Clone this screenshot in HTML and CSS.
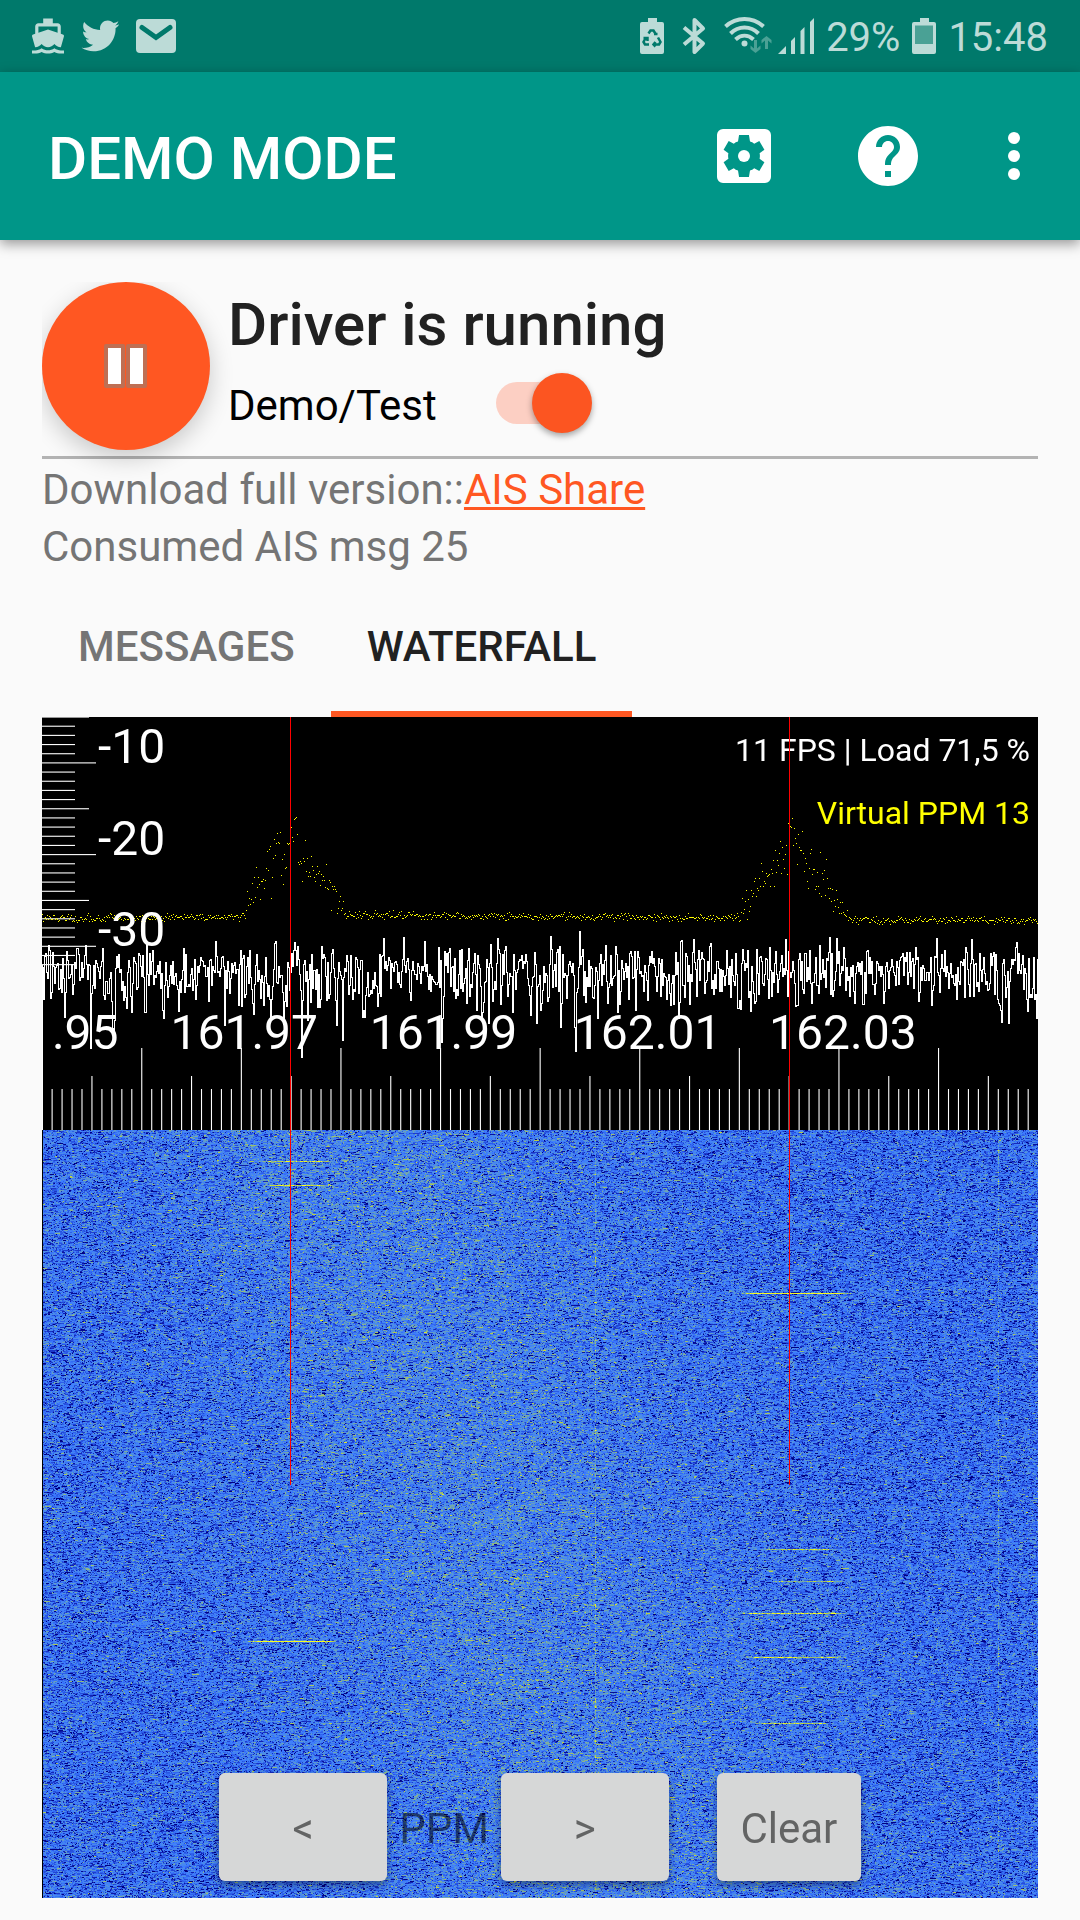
FILE: index.html
```html
<!DOCTYPE html>
<html lang="en">
<head>
<meta charset="utf-8">
<meta name="viewport" content="width=device-width, initial-scale=1">
<title>AIS Share</title>
<link rel="stylesheet" href="styles.css">
</head>
<body>
<div class="status-bar">
  <div class="status-group status-left">
    <svg class="ic-boat" viewBox="2 1 20 22"><path d="M20 21c-1.39 0-2.78-.47-4-1.32-2.44 1.71-5.56 1.71-8 0C6.78 20.53 5.39 21 4 21H2v2h2c1.38 0 2.74-.35 4-.99 2.52 1.29 5.48 1.29 8 0 1.26.65 2.62.99 4 .99h2v-2h-2zM3.95 19H4c1.6 0 3.02-.88 4-2 .98 1.12 2.4 2 4 2s3.02-.88 4-2c.98 1.12 2.4 2 4 2h.05l1.89-6.68c.08-.26.06-.54-.06-.78s-.34-.42-.6-.5L20 10.62V6c0-1.1-.9-2-2-2h-3V1H9v3H6c-1.1 0-2 .9-2 2v4.62l-1.29.42c-.26.08-.48.26-.6.5s-.15.52-.06.78L3.95 19zM6 6h12v3.97L12 8 6 9.97V6z"/></svg>
    <svg class="ic-bird" viewBox="0 2 24 20"><path d="M23.643 4.937c-.835.37-1.732.62-2.675.733.962-.576 1.7-1.49 2.048-2.578-.9.534-1.897.922-2.958 1.13-.85-.904-2.06-1.47-3.4-1.47-2.572 0-4.658 2.086-4.658 4.66 0 .364.042.718.12 1.06-3.873-.195-7.304-2.05-9.602-4.868-.4.69-.63 1.49-.63 2.342 0 1.616.823 3.043 2.072 3.878-.764-.025-1.482-.234-2.11-.583v.06c0 2.257 1.605 4.14 3.737 4.568-.392.106-.803.162-1.227.162-.3 0-.593-.028-.877-.082.593 1.85 2.313 3.198 4.352 3.234-1.595 1.25-3.604 1.995-5.786 1.995-.376 0-.747-.022-1.112-.065 2.062 1.323 4.51 2.093 7.14 2.093 8.57 0 13.255-7.098 13.255-13.254 0-.2-.005-.402-.014-.602.91-.658 1.7-1.477 2.323-2.41z"/></svg>
    <svg class="ic-mail" viewBox="0 0 40 34"><rect width="40" height="34" rx="4"/><path class="cut" d="M6 8.500L20 18.500L34 8.500"/></svg>
  </div>
  <div class="status-group status-right">
    <svg class="ic-battery" viewBox="0 0 24 36"><path d="M8 0h9v4h5a2 2 0 0 1 2 2v28a2 2 0 0 1-2 2H2a2 2 0 0 1-2-2V6a2 2 0 0 1 2-2h6z"/><path class="recycle" d="M8.500 15.500L10.500 12.500h3L16 16.500M18 19.500L20.500 24L19 26.500H14M9 26.500H5L3.500 24L6 19.500M14 16h3.500M15.500 24l-2 2.500 2 2M3.500 20h4v3"/></svg>
    <svg class="ic-bt" viewBox="0 0 24 38"><path d="M2 10.500L21 26.500L12.500 35V3L21 11.500L2 27.500"/></svg>
    <svg class="ic-wifi" viewBox="0 0 48 38"><g class="arcs"><path d="M1.500 9.500C12.500-.5 28.500-.5 39.500 9.500"/><path d="M6.500 16.500C14.500 8.500 26.500 8.500 34.500 16.500"/><path d="M11.500 22.500C17 17.500 24 17.500 29.500 22.500"/></g><circle cx="20.500" cy="26.500" r="3"/><path class="dim" d="M30 23h3v8.500l3.500-3v3.500L31.500 36l-5-4v-3.500l3.500 3zM41 32h3v-8.500l3.500 3V23L42.500 19l-5 4v3.500l3.500-3z"/></svg>
    <svg class="ic-signal" viewBox="0 0 36 36"><path d="M0 36l8-8v8zM13 36V23l4-4v17zM22.500 36V13l4-4v27zM32 36V4l4-4v36z"/></svg>
    <span class="pct">29%</span>
    <svg class="ic-battery" viewBox="0 0 24 36"><path d="M8 0h9v4h5a2 2 0 0 1 2 2v28a2 2 0 0 1-2 2H2a2 2 0 0 1-2-2V6a2 2 0 0 1 2-2h6z"/><path class="level" d="M3 7.500h18V26H3z"/></svg>
    <span class="clock">15:48</span>
  </div>
</div>

<header class="toolbar">
  <h1>DEMO MODE</h1>
  <button class="action" type="button" aria-label="Settings"><svg viewBox="0 0 24 24"><path fill-rule="evenodd" d="M5 3h14a2 2 0 0 1 2 2v14a2 2 0 0 1-2 2H5a2 2 0 0 1-2-2V5a2 2 0 0 1 2-2zM10.350 5L10 7.200Q9.200 7.300 8.600 7.900L6.900 7L5.200 9.900L6.800 11.100Q6.600 12 6.800 12.900L5.200 14.100L6.900 17L8.600 16.100Q9.200 16.700 10 16.800L10.350 19H13.650L14 16.800Q14.800 16.700 15.400 16.100L17.100 17L18.800 14.100L17.200 12.900Q17.400 12 17.200 11.100L18.800 9.900L17.100 7L15.400 7.900Q14.800 7.300 14 7.200L13.650 5z"/><circle cx="12" cy="12" r="2"/></svg></button>
  <button class="action" type="button" aria-label="Help"><svg viewBox="0 0 24 24"><path d="M12 2C6.480 2 2 6.480 2 12s4.480 10 10 10 10-4.480 10-10S17.520 2 12 2zm1 17h-2v-2h2v2zm2.070-7.750l-.9.920C13.450 12.900 13 13.500 13 15h-2v-.5c0-1.100.450-2.100 1.170-2.830l1.240-1.260c.370-.360.590-.860.590-1.410 0-1.100-.9-2-2-2s-2 .9-2 2H8c0-2.210 1.790-4 4-4s4 1.790 4 4c0 .880-.360 1.680-.930 2.250z"/></svg></button>
  <button class="action overflow" type="button" aria-label="More options"><svg viewBox="0 0 24 24"><circle cx="12" cy="6" r="2"/><circle cx="12" cy="12" r="2"/><circle cx="12" cy="18" r="2"/></svg></button>
</header>

<main>
  <section class="driver">
    <div class="fab-clip">
      <button class="fab" type="button" aria-label="Pause"><svg viewBox="0 0 44 44"><rect x="2" y="2" width="17" height="40"/><rect x="24" y="2" width="17" height="40"/></svg></button>
    </div>
    <div class="driver-info">
      <h2>Driver is running</h2>
      <div class="mode">
        <label for="demo">Demo/Test</label>
        <input id="demo" class="switch" type="checkbox" role="switch" checked>
      </div>
    </div>
  </section>

  <div class="notes">
    <p>Download full version::<a href="#full">AIS Share</a></p>
    <p>Consumed AIS msg 25</p>
  </div>

  <div class="tabs" role="tablist">
    <button class="tab" type="button" role="tab" aria-selected="false">MESSAGES</button>
    <button class="tab" type="button" role="tab" aria-selected="true">WATERFALL</button>
  </div>

  <section class="analyzer">
    <div class="spectrum">
      <canvas id="spectrum"></canvas>
      <svg class="labels">
        <g class="scale">
          <text x="56" y="46">-10</text>
          <text x="56" y="138">-20</text>
          <text x="56" y="229">-30</text>
          <text x="1%" y="332">.95</text>
          <text x="12.900%" y="332">161.97</text>
          <text x="32.900%" y="332">161.99</text>
          <text x="53.400%" y="332">162.01</text>
          <text x="73%" y="332">162.03</text>
        </g>
        <svg x="100%" class="stats">
          <text x="-8" y="44">11 FPS | Load 71,5 %</text>
          <text x="-8" y="107" class="ppm">Virtual PPM 13</text>
        </svg>
      </svg>
    </div>
    <div class="waterfall">
      <canvas id="waterfall"></canvas>
      <div class="controls">
        <button class="btn wide" type="button">&lt;</button>
        <span class="ppm-label">PPM</span>
        <button class="btn wide" type="button">&gt;</button>
        <button class="btn clear" type="button">Clear</button>
      </div>
    </div>
    <span class="marker marker-a"></span>
    <span class="marker marker-b"></span>
  </section>
</main>
<script src="app.js"></script>
</body>
</html>
```
FILE: styles.css
```css
* { box-sizing: border-box; }

body {
  margin: 0;
  min-height: 100vh;
  display: flex;
  flex-direction: column;
  background: #fafafa;
  color: #212121;
  font-family: Roboto, sans-serif;
  font-size: 42px;
  line-height: 57px;
}

h1, h2, p { margin: 0; }
button { font: inherit; border: 0; padding: 0; cursor: pointer; }
svg { display: block; }

/* status bar */
.status-bar {
  display: flex;
  justify-content: space-between;
  height: 72px;
  padding: 0 32px;
  background: #00796b;
  color: #bcdbd7;
  font-size: 40px;
}
.status-group { display: flex; align-items: center; }
.status-group svg { fill: #bcdbd7; flex: none; }
.status-group span { padding-top: 2px; }
.status-left { gap: 16px; }
.status-right { gap: 12px; }
.ic-boat { width: 32px; height: 36px; }
.ic-bird { width: 40px; height: 36px; }
.ic-mail { width: 40px; height: 34px; }
.ic-mail .cut { fill: none; stroke: #00796b; stroke-width: 5; stroke-linecap: round; }
.ic-battery { width: 24px; height: 36px; }
.ic-battery .recycle { fill: none; stroke: #00796b; stroke-width: 2.5; }
.ic-battery .level { fill: #4aa195; }
.ic-bt { width: 24px; height: 38px; margin: 0 6px; }
.status-group .ic-bt { fill: none; stroke: #bcdbd7; stroke-width: 4; stroke-linejoin: round; }
.ic-wifi { width: 48px; height: 38px; }
.ic-wifi .arcs { fill: none; stroke: #bcdbd7; stroke-width: 4; }
.ic-wifi .dim { fill: #4aa195; }
.ic-signal { width: 36px; height: 36px; margin-left: -6px; }

/* toolbar */
.toolbar {
  display: flex;
  align-items: center;
  height: 168px;
  padding: 0 12px 0 48px;
  background: #009688;
  color: #fff;
  box-shadow: 0 4px 12px rgba(0, 0, 0, .4);
}
h1 { flex: 1; padding-top: 4px; font-size: 60px; font-weight: 500; }
.action {
  display: flex;
  align-items: center;
  justify-content: center;
  width: 144px;
  height: 144px;
  background: none;
}
.action svg { width: 72px; height: 72px; fill: #fff; }
.overflow { width: 108px; }

/* content */
main {
  flex: 1;
  display: flex;
  flex-direction: column;
  padding: 42px 42px 22px;
}
.driver {
  display: flex;
  gap: 18px;
  height: 177px;
  border-bottom: 3px solid #b3b3b3;
}
.fab-clip { clip-path: inset(0 -42px -42px 0); }
.fab {
  display: flex;
  align-items: center;
  justify-content: center;
  width: 168px;
  height: 168px;
  border-radius: 50%;
  background: #ff5722;
  box-shadow: 0 8px 24px rgba(0, 0, 0, .2);
}
.fab svg { width: 44px; height: 44px; fill: #fff; stroke: #bf6f53; stroke-width: 4; stroke-linejoin: round; }
.driver-info { padding-top: 8px; }
h2 { font-size: 60px; line-height: 70px; font-weight: 500; }
.mode { display: flex; align-items: center; height: 86px; color: #000; }
.mode label { padding-top: 4px; }
.switch {
  appearance: none;
  position: relative;
  width: 88px;
  height: 42px;
  margin: 0 0 0 59px;
  border-radius: 21px;
  background: #fccfc3;
}
.switch::before {
  content: "";
  position: absolute;
  top: -9px;
  right: -8px;
  width: 60px;
  height: 60px;
  border-radius: 50%;
  background: #fc5521;
  box-shadow: 0 3px 6px rgba(0, 0, 0, .35);
}

.notes { height: 114px; padding-top: 2px; color: #757575; }
.notes a {
  color: #ff5722;
  text-decoration-thickness: 3px;
  text-underline-offset: 3px;
  text-decoration-skip-ink: none;
}

.tabs { display: flex; height: 144px; }
.tab {
  padding: 8px 36px 0;
  border-bottom: 6px solid transparent;
  background: none;
  color: #757575;
  font-weight: 500;
}
.tab[aria-selected="true"] { color: #212121; border-color: #ff5722; }

/* analyzer */
.analyzer { flex: 1; position: relative; display: flex; flex-direction: column; }
.analyzer canvas { position: absolute; inset: 0; width: 100%; height: 100%; }
.spectrum { position: relative; height: 413px; background: #000; }
.labels { position: relative; width: 100%; height: 100%; fill: #fff; }
.scale { font-size: 48px; }
.stats { font-size: 32px; text-anchor: end; overflow: visible; }
.ppm { fill: #ff0; }
.marker {
  position: absolute;
  top: 0;
  width: 1px;
  height: 768px;
  background: #f00;
}
.marker-a { left: 24.9%; }
.marker-b { left: 75%; }

.waterfall {
  flex: 1;
  position: relative;
  display: flex;
  align-items: flex-end;
  justify-content: center;
  min-height: 400px;
  background: #3f78ee;
}
.controls {
  position: relative;
  display: flex;
  align-items: center;
  gap: 12px;
  padding-bottom: 17px;
}
.btn {
  height: 108px;
  padding-top: 2px;
  border-radius: 6px;
  background: #d6d7d7;
  color: #636464;
  box-shadow: 0 4px 8px rgba(0, 0, 0, .4);
}
.wide { width: 168px; }
.clear { width: 144px; margin-left: 36px; }
.ppm-label { padding-top: 2px; color: rgba(0, 0, 0, .54); }
```
FILE: app.js
```js
// Small seeded generator so the demo signal is the same on every load.
function generator(seed) {
  return function () {
    seed = (seed + 0x6D2B79F5) | 0;
    let t = Math.imul(seed ^ (seed >>> 15), 1 | seed);
    t = (t + Math.imul(t ^ (t >>> 7), 61 | t)) ^ t;
    return ((t ^ (t >>> 14)) >>> 0) / 4294967296;
  };
}

function prepare(id) {
  const canvas = document.getElementById(id);
  canvas.width = canvas.clientWidth;
  canvas.height = canvas.clientHeight;
  return canvas.getContext('2d');
}

function drawSpectrum() {
  const ctx = prepare('spectrum');
  const w = ctx.canvas.width;
  const h = ctx.canvas.height;
  const rnd = generator(7);
  ctx.fillStyle = '#000';
  ctx.fillRect(0, 0, w, h);

  // level scale
  ctx.fillStyle = '#fff';
  for (let k = 0; k < 28; k++) {
    const len = k % 10 === 5 ? 54 : k % 10 === 0 ? 47 : 33;
    ctx.fillRect(0, k * 9.17 - 0.5, len, 1.1);
  }
  // frequency scale
  for (let k = 1; k < 100; k++) {
    const top = k % 10 === 0 ? 331 : k % 5 === 0 ? 359 : 372;
    ctx.fillRect(k * w / 100 - 0.4, top, 1.1, h - top);
  }

  // averaged peaks
  ctx.fillStyle = '#ff0';
  for (let x = 0; x < w; x++) {
    const f = x / w * 996;
    let y = f < 248 ? 201 - f / 124 : f < 700 ? 197 + (f - 248) / 113 : 203;
    let spread = 6;
    for (const [c, half] of [[250, 54], [750, 56]]) {
      const d = Math.abs(f - c) / half;
      if (d < 1) {
        y -= 82 * (1 - d);
        spread = 12 + 36 * Math.min(1, (1 - d) * 2);
      }
    }
    y += (rnd() + rnd() - 1) * spread * 0.8;
    ctx.fillRect(x, Math.round(y), 1, 1);
  }

  // live signal
  const e = () => -Math.log(1 - rnd());
  ctx.fillStyle = '#fff';
  ctx.fillRect(0, 248, 1, h - 248);
  let shared = e() + e();
  let last = 250;
  for (let x = 1; x < w; x++) {
    const fresh = e() + e();
    const level = Math.log10((shared + fresh) / 4);
    const y = Math.round(251 - (level > 0 ? 76 : 84) * level);
    shared = rnd() < 0.5 ? e() + e() : fresh;
    ctx.fillRect(x, Math.min(y, last), 1, Math.abs(y - last) + 1);
    last = y;
  }
}

const palette = [
  [0, 0, 0, 130], [0.2, 20, 40, 185], [0.4, 44, 92, 232], [0.55, 60, 124, 255],
  [0.75, 80, 144, 226], [0.9, 116, 168, 170], [1.1, 190, 210, 60], [1.3, 255, 255, 30]
];

function colour(t) {
  if (t <= 0) return palette[0].slice(1);
  for (let i = 1; i < palette.length; i++) {
    const a = palette[i - 1];
    const b = palette[i];
    if (t < b[0]) {
      const m = (t - a[0]) / (b[0] - a[0]);
      return [1, 2, 3].map(c => a[c] + (b[c] - a[c]) * m);
    }
  }
  return palette[palette.length - 1].slice(1);
}

// received bursts: [row, start, end, strength]
const bursts = [
  [31, 216, 292, 0.5], [55, 223, 288, 0.6], [163, 699, 808, 0.8], [511, 206, 292, 0.8],
  [419, 718, 793, 0.5], [451, 729, 803, 0.45], [483, 700, 806, 0.55],
  [527, 703, 803, 0.55], [593, 713, 786, 0.55]
];

function drawWaterfall() {
  const ctx = prepare('waterfall');
  const w = ctx.canvas.width;
  const h = ctx.canvas.height;
  const img = ctx.createImageData(w, h);
  const rnd = generator(42);
  for (let y = 0; y < h; y++) {
    const row = (rnd() - 0.5) * 0.05;
    let prev = 0.5;
    for (let x = 0; x < w; x++) {
      const f = x / w * 996;
      const power = -Math.log((1 - rnd()) * (1 - rnd()) * (1 - rnd())) / 3;
      const n = 0.57 + 0.36 * Math.log(power + 0.01);
      const v = rnd() < 0.35 ? prev : n;
      prev = v;
      const d = (f - 320 - y * 0.32) / 230;
      let t = v - 0.03 + 0.12 * Math.exp(-d * d) + row;
      if (f >= 553 && f < 554 || f >= 956 && f < 957) t += 0.2;
      for (const [r, a, b, s] of bursts) {
        if (y === r && f >= a && f <= b) {
          t = Math.max(t, 0.45) + s * Math.min(1, 0.3 + Math.min(f - a, b - f) / 16);
        }
      }
      const c = x === 0 ? [0, 0, 0] : colour(t);
      const i = (y * w + x) * 4;
      img.data[i] = c[0];
      img.data[i + 1] = c[1];
      img.data[i + 2] = c[2];
      img.data[i + 3] = 255;
    }
  }
  ctx.putImageData(img, 0, 0);
}

function draw() {
  drawSpectrum();
  drawWaterfall();
}

window.addEventListener('resize', draw);
draw();
```
